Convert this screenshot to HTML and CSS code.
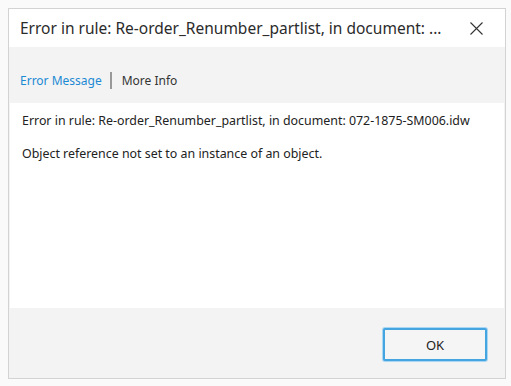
FILE: index.html
```html
<!DOCTYPE html>
<html>
<head>
<meta charset="utf-8">
<link rel="stylesheet" href="styles.css">
</head>
<body>
<div class="dialog">
  <div class="titlebar">
    <span class="title">Error in rule: Re-order_Renumber_partlist, in document: ...</span>
    <svg class="close" width="13" height="13" viewBox="0 0 13 13"><path d="M0.5 0.5 L12.5 12.5 M12.5 0.5 L0.5 12.5" stroke="#333" stroke-width="1.1" fill="none"/></svg>
  </div>
  <div class="tabs">
    <span class="tab active">Error Message</span>
    <span class="sep"></span>
    <span class="tab">More Info</span>
  </div>
  <div class="content">
    <p class="msg">Error in rule: Re-order_Renumber_partlist, in document: 072-1875-SM006.idw</p>
    <p class="msg">Object reference not set to an instance of an object.</p>
  </div>
  <div class="footer">
    <button class="ok">OK</button>
  </div>
</div>
</body>
</html>
```
FILE: styles.css
```css
html, body { margin: 0; padding: 0; }
body {
  padding: 8px;
  background: #fafafa;
  font-family: "Noto Sans", "Open Sans", sans-serif;
  color: #222;
}
.dialog {
  width: 496px;
  height: 369px;
  border: 1px solid #d3d3d3;
  background: #f3f3f3;
  display: flex;
  flex-direction: column;
}
.titlebar {
  height: 38px;
  background: #fff;
  display: flex;
  align-items: center;
  justify-content: space-between;
  padding: 0 22px 0 11px;
  flex: none;
}
.title {
  font-size: 15.5px;
  color: #2b2b2b;
  white-space: nowrap;
}
.close { display: block; }
.tabs {
  height: 56px;
  flex: none;
  display: flex;
  align-items: center;
  padding: 10px 0 0 11px;
  box-sizing: border-box;
  font-size: 12px;
}
.tab { color: #333; }
.tab.active { color: #1b8ad3; }
.sep {
  width: 2px;
  height: 17px;
  background: #999;
  margin: 0 10px 0 8px;
}
.content {
  flex: none;
  height: 205px;
  margin: 0 1px;
  background: #fff;
  padding: 9px 12px;
  box-sizing: border-box;
}
.msg {
  margin: 0 0 15px 0;
  font-size: 12.4px;
  line-height: 18px;
  color: #222;
}
.footer {
  flex: 1;
  display: flex;
  justify-content: flex-end;
  align-items: flex-start;
  padding: 20px 18px 0 0;
}
.ok {
  width: 104px;
  height: 33px;
  border: 2px solid #45a5e0;
  box-shadow: 0 0 0 1px #a9d6f2;
  border-radius: 2px;
  background: #f5f5f5;
  font-family: inherit;
  font-size: 13px;
  color: #222;
  padding: 0;
}
```
